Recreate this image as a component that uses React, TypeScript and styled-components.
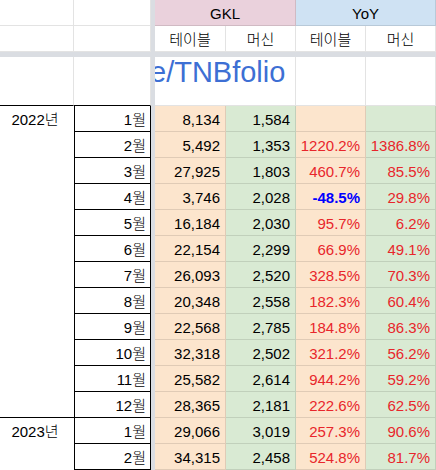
import React from 'react';
import styled, { createGlobalStyle } from 'styled-components';

const GRID = 'rgba(0, 0, 0, 0.11)';
const FREEZE = '#dadde2';
const PEACH = '#fce5cd';
const GREEN = '#d9ead3';
const RED = '#e8262b';

type Row = { month: string; table: string; machine: string; yoyTable?: string; yoyMachine?: string; drop?: boolean };

const rows2022: Row[] = [
  { month: '1월', table: '8,134', machine: '1,584' },
  { month: '2월', table: '5,492', machine: '1,353', yoyTable: '1220.2%', yoyMachine: '1386.8%' },
  { month: '3월', table: '27,925', machine: '1,803', yoyTable: '460.7%', yoyMachine: '85.5%' },
  { month: '4월', table: '3,746', machine: '2,028', yoyTable: '-48.5%', yoyMachine: '29.8%', drop: true },
  { month: '5월', table: '16,184', machine: '2,030', yoyTable: '95.7%', yoyMachine: '6.2%' },
  { month: '6월', table: '22,154', machine: '2,299', yoyTable: '66.9%', yoyMachine: '49.1%' },
  { month: '7월', table: '26,093', machine: '2,520', yoyTable: '328.5%', yoyMachine: '70.3%' },
  { month: '8월', table: '20,348', machine: '2,558', yoyTable: '182.3%', yoyMachine: '60.4%' },
  { month: '9월', table: '22,568', machine: '2,785', yoyTable: '184.8%', yoyMachine: '86.3%' },
  { month: '10월', table: '32,318', machine: '2,502', yoyTable: '321.2%', yoyMachine: '56.2%' },
  { month: '11월', table: '25,582', machine: '2,614', yoyTable: '944.2%', yoyMachine: '59.2%' },
  { month: '12월', table: '28,365', machine: '2,181', yoyTable: '222.6%', yoyMachine: '62.5%' },
];

const rows2023: Row[] = [
  { month: '1월', table: '29,066', machine: '3,019', yoyTable: '257.3%', yoyMachine: '90.6%' },
  { month: '2월', table: '34,315', machine: '2,458', yoyTable: '524.8%', yoyMachine: '81.7%' },
];

const DataRow: React.FC<{ row: Row }> = ({ row }) => (
  <>
    <MonthCell>{row.month}</MonthCell>
    <NumCell $bg={PEACH}>{row.table}</NumCell>
    <NumCell $bg={GREEN}>{row.machine}</NumCell>
    <NumCell $bg={PEACH} $color={row.drop ? '#0000ff' : RED} $bold={row.drop}>
      {row.yoyTable}
    </NumCell>
    <NumCell $bg={GREEN} $color={RED}>
      {row.yoyMachine}
    </NumCell>
  </>
);

export default function App() {
  return (
    <>
      <GlobalStyle />
      <Sheet>
        <FreezeCol />
        <FreezeRow />
        <YearCell $start={5} $span={12} $closed>
          2022년
        </YearCell>
        <YearCell $start={17} $span={2}>
          2023년
        </YearCell>

        <Cell />
        <Cell />
        <GroupCell $bg="#ead1dc">GKL</GroupCell>
        <GroupCell $bg="#cfe2f3">YoY</GroupCell>

        <Cell />
        <Cell />
        <HeadCell>테이블</HeadCell>
        <HeadCell>머신</HeadCell>
        <HeadCell>테이블</HeadCell>
        <HeadCell>머신</HeadCell>

        <Cell $strong />
        <Cell $strong />
        <LinkCell>
          <LinkText>e/TNBfolio</LinkText>
        </LinkCell>
        <Cell />
        <Cell />

        {rows2022.map((row) => (
          <DataRow key={`22-${row.month}`} row={row} />
        ))}
        {rows2023.map((row) => (
          <DataRow key={`23-${row.month}`} row={row} />
        ))}
      </Sheet>
    </>
  );
}

const GlobalStyle = createGlobalStyle`
  body {
    margin: 0;
    background: #fff;
  }
`;

const Sheet = styled.div`
  display: grid;
  grid-template-columns: 74px 77px 4px 71px 70px 70px 70px;
  grid-template-rows: 26px 26px 5px 49px repeat(14, 26px);
  width: 436px;
  height: 470px;
  overflow: hidden;
  font-family: 'Liberation Sans', 'Noto Sans CJK KR', sans-serif;
  font-size: 15px;
  line-height: 17px;
  color: #000;
`;

const FreezeCol = styled.div`
  grid-column: 3;
  grid-row: 1 / -1;
  background: ${FREEZE};
`;

const FreezeRow = styled.div`
  grid-column: 1 / -1;
  grid-row: 3;
  background: ${FREEZE};
`;

const Cell = styled.div<{ $bg?: string; $strong?: boolean }>`
  box-sizing: border-box;
  display: flex;
  align-items: flex-end;
  padding: 0 5px 3px;
  white-space: nowrap;
  overflow: hidden;
  background: ${(p) => p.$bg || '#fff'};
  border-right: 1px solid ${GRID};
  border-bottom: 1px solid ${(p) => (p.$strong ? '#000' : GRID)};
`;

const GroupCell = styled(Cell)`
  grid-column: span 2;
  justify-content: center;
`;

const HeadCell = styled(Cell)`
  justify-content: center;
  font-weight: 300;
`;

const NumCell = styled(Cell)<{ $color?: string; $bold?: boolean }>`
  justify-content: flex-end;
  color: ${(p) => p.$color || '#000'};
  font-weight: ${(p) => (p.$bold ? 700 : 400)};
`;

const MonthCell = styled(Cell)`
  justify-content: flex-end;
  padding-right: 4px;
  font-weight: 300;
  border-left: 1px solid #000;
  border-right: 1px solid #000;
  border-bottom: 1px solid #000;
`;

const YearCell = styled.div<{ $start: number; $span: number; $closed?: boolean }>`
  grid-column: 1;
  grid-row: ${(p) => p.$start} / span ${(p) => p.$span};
  box-sizing: border-box;
  display: flex;
  justify-content: center;
  align-items: flex-start;
  padding-top: 5px;
  padding-right: 4px;
  font-weight: 300;
  background: #fff;
  border-bottom: ${(p) => (p.$closed ? '1px solid #000' : 'none')};
`;

const LinkCell = styled(Cell)`
  grid-column: span 2;
  align-items: flex-start;
  padding: 0;
`;

const LinkText = styled.span`
  margin-left: -5px;
  font-size: 29px;
  line-height: 31px;
  color: #3d6fd4;
`;
